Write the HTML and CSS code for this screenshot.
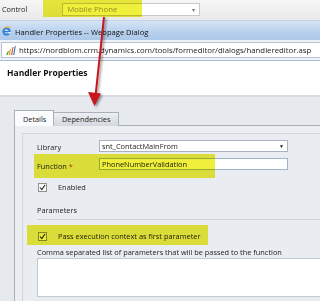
FILE: index.html
```html
<!DOCTYPE html>
<html lang="en">
<head>
<meta charset="utf-8">
<title>Handler Properties</title>
<link rel="stylesheet" href="styles.css">
</head>
<body>
<div class="page">
  <div class="formbar">
    <span class="formbar-label">Control</span>
    <div class="combo-top">
      <span class="combo-top-text">Mobile Phone</span>
      <span class="combo-top-caret">&#9662;</span>
    </div>
  </div>

  <div class="titlebar">
    <svg class="ie-icon" width="9" height="10" viewBox="0 0 9 10">
      <circle cx="4.5" cy="5.5" r="3.2" fill="none" stroke="#2a7fd6" stroke-width="1.8"/>
      <rect x="2" y="5" width="5.5" height="1.2" fill="#2a7fd6"/>
      <rect x="6" y="6" width="3" height="1.5" fill="#dfe9f6"/>
      <path d="M1 3.5 C3 0.5 8 0 8.5 1.5" fill="none" stroke="#f2b620" stroke-width="1"/>
    </svg>
    <span class="title-text">Handler Properties -- Webpage Dialog</span>
  </div>

  <div class="addressbar">
    <div class="address-field">
      <svg class="crm-icon" width="11" height="11" viewBox="0 0 11 11">
        <path d="M1 10 L3 6 L4 6 L2.5 10 Z" fill="#3a9a3a"/>
        <path d="M3.5 10 L5 4 L6 4 L5 10 Z" fill="#f0a020"/>
        <path d="M6 10 L7.5 2 L8.5 2 L7.2 10 Z" fill="#e0501a"/>
        <path d="M8.2 10 L9.8 1 L10.8 1 L9.3 10 Z" fill="#2a6fc8"/>
      </svg>
      <span class="url">https://nordblom.crm.dynamics.com/tools/formeditor/dialogs/handlereditor.asp</span>
    </div>
  </div>

  <div class="dialog-header">
    <h1 class="dialog-title">Handler Properties</h1>
  </div>

  <div class="dialog-body">
    <div class="tabs">
      <div class="tab tab-active">Details</div>
      <div class="tab">Dependencies</div>
    </div>
    <div class="tab-panel">
      <div class="section">
        <div class="field-row row-library">
          <span class="field-label">Library</span>
          <div class="combo">
            <span class="combo-text">snt_ContactMainFrom</span>
            <span class="combo-caret">&#9660;</span>
          </div>
        </div>
        <div class="field-row row-function">
          <span class="field-label">Function <span class="req">*</span></span>
          <div class="textbox">PhoneNumberValidation</div>
        </div>
        <div class="check-row row-enabled">
          <span class="checkbox">
            <svg width="7" height="7" viewBox="0 0 7 7"><path d="M1 3.5 L2.8 5.5 L6 1" fill="none" stroke="#222" stroke-width="1.1"/></svg>
          </span>
          <span class="check-label">Enabled</span>
        </div>
        <div class="group-title">Parameters</div>
        <div class="check-row row-pass">
          <span class="checkbox">
            <svg width="7" height="7" viewBox="0 0 7 7"><path d="M1 3.5 L2.8 5.5 L6 1" fill="none" stroke="#222" stroke-width="1.1"/></svg>
          </span>
          <span class="check-label">Pass execution context as first parameter</span>
        </div>
        <div class="param-label">Comma separated list of parameters that will be passed to the function</div>
        <div class="textarea"></div>
      </div>
    </div>
  </div>

  <div class="marker marker-control"></div>
  <div class="marker marker-function"></div>
  <div class="marker marker-pass"></div>

  <svg class="annotation-arrow" width="320" height="301" viewBox="0 0 320 301">
    <defs>
      <filter id="shadow" x="-50%" y="-50%" width="200%" height="200%">
        <feDropShadow dx="1.5" dy="1.5" stdDeviation="1" flood-color="#000" flood-opacity="0.45"/>
      </filter>
    </defs>
    <g filter="url(#shadow)">
      <line x1="104" y1="17" x2="95.5" y2="96" stroke="#c8141e" stroke-width="2"/>
      <polygon points="88,92 101,93.5 94.5,106" fill="#c8141e"/>
    </g>
  </svg>
</div>
</body>
</html>
```

FILE: styles.css
```css
* { box-sizing: border-box; }

html, body {
  margin: 0;
  padding: 0;
}

body {
  width: 320px;
  height: 301px;
  overflow: hidden;
  font-family: "Open Sans", "Noto Sans", sans-serif;
  font-size: 7.5px;
  color: #1e1e1e;
  background: #e6e9ee;
}

.page {
  position: relative;
  width: 320px;
  height: 301px;
  overflow: hidden;
}

/* top form strip */
.formbar {
  height: 20px;
  background: linear-gradient(#f6f6f6, #e9e9e9);
  display: flex;
  align-items: flex-start;
}

.formbar-label {
  margin-left: 2px;
  margin-top: 4px;
  line-height: 10px;
  font-size: 7.3px;
  color: #222;
}

.combo-top {
  margin-left: 35px;
  margin-top: 3px;
  width: 138px;
  height: 13px;
  border: 1px solid #c8c8c8;
  background: #fff;
  display: flex;
  align-items: center;
  padding-left: 4px;
}

.combo-top-text {
  flex: 1;
  color: #9a9a9a;
  font-size: 7.8px;
  line-height: 11px;
}

.combo-top-caret {
  color: #777;
  font-size: 6px;
  margin-right: 4px;
}

/* window title bar */
.titlebar {
  height: 20px;
  background: linear-gradient(#d6e4f5, #b7cfec 60%, #adc8ea);
  border-top: 1px solid #c4d4e8;
  display: flex;
  align-items: center;
  padding-left: 2px;
}

.ie-icon { display: block; margin-top: 1px; }

.title-text {
  margin-left: 4px;
  font-size: 7.6px;
  line-height: 12px;
  margin-top: 2px;
  color: #111;
}

/* address bar */
.addressbar {
  height: 21px;
  background: #eef2f8;
  border-bottom: 1px solid #a9bdd8;
  padding: 2px 0 2px 1px;
}

.address-field {
  height: 16px;
  background: #fff;
  border: 1px solid #b9c3cf;
  border-right: none;
  display: flex;
  align-items: center;
  padding-left: 3px;
  overflow: hidden;
}

.crm-icon { display: block; flex: none; }

.url {
  margin-left: 3px;
  font-size: 7.8px;
  line-height: 12px;
  color: #222;
  white-space: nowrap;
}

/* dialog header */
.dialog-header {
  height: 36px;
  background: #fff;
  border-bottom: 2px solid #d9dce1;
  padding: 6px 0 0 7px;
}

.dialog-title {
  margin: 0;
  font-size: 8.5px;
  line-height: 11px;
  font-weight: 700;
  color: #111;
}

/* body */
.dialog-body {
  padding: 13px 0 0 14px;
  background: #e6e9ee;
  height: 204px;
}

.tabs {
  display: flex;
  align-items: flex-end;
  height: 16px;
  position: relative;
  z-index: 1;
}

.tab {
  height: 14px;
  padding: 0 8px;
  border: 1px solid #a7afba;
  border-bottom: none;
  background: linear-gradient(#eceff3, #d3d8df);
  line-height: 13px;
  font-size: 7.3px;
  color: #222;
}

.tab-active {
  height: 16px;
  width: 40px;
  padding: 0 0 0 8px;
  background: #fbfcfd;
  line-height: 17px;
}

.tab + .tab {
  border-left: none;
}

.tab-panel {
  margin-top: -1px;
  border-top: 1px solid #a7afba;
  border-left: 1px solid #a7afba;
  background: #eceef2;
  padding: 7px 0 0 7px;
  height: 176px;
}

.section {
  border-top: 1px solid #d2d6dc;
  border-left: 1px solid #d2d6dc;
  background: #e9ecf0;
  height: 170px;
  padding: 6px 0 0 14px;
}

.field-row {
  display: flex;
  align-items: center;
  height: 12px;
}

.row-function {
  margin-top: 6px;
}

.field-label {
  width: 62px;
  font-size: 7.4px;
  line-height: 10px;
  color: #222;
  padding-top: 1px;
}

.row-function .field-label { padding-top: 4px; }

.req { color: #e0302a; }

.combo {
  width: 189px;
  height: 12px;
  border: 1px solid #aab2bd;
  background: #fff;
  display: flex;
  align-items: center;
  padding-left: 2px;
}

.combo-text {
  flex: 1;
  font-size: 7.4px;
  line-height: 10px;
}

.combo-caret {
  font-size: 5px;
  margin-right: 3px;
  color: #111;
}

.textbox {
  width: 189px;
  height: 12px;
  border: 1px solid #9fb3cf;
  background: #fff;
  padding-left: 2px;
  font-size: 7.4px;
  line-height: 10px;
}

.check-row {
  display: flex;
  align-items: center;
  height: 10px;
}

.row-enabled { margin-top: 12px; }
.row-pass { margin-top: 11px; }

.checkbox {
  width: 9px;
  height: 9px;
  margin-left: 1px;
  border: 1px solid #8e8f8f;
  background: linear-gradient(#f4f4f4, #fff);
  display: flex;
  align-items: center;
  justify-content: center;
}

.checkbox svg { display: block; }

.check-label {
  margin-left: 11px;
  font-size: 7.4px;
  line-height: 10px;
}

.group-title {
  margin-top: 13px;
  height: 15px;
  border-bottom: 1px solid #cfd3d9;
  font-size: 7.4px;
  line-height: 10px;
  color: #222;
}

.param-label {
  margin-top: 6px;
  font-size: 7.4px;
  line-height: 10px;
  color: #222;
  white-space: nowrap;
}

.textarea {
  margin-top: 1px;
  height: 39px;
  border: 1px solid #c3c8cf;
  border-right: none;
  background: #fff;
}

/* highlighter marks */
.marker {
  position: absolute;
  background: #efef3c;
  mix-blend-mode: multiply;
}

.marker-control { left: 43px; top: 0; width: 99px; height: 17px; }
.marker-function { left: 34px; top: 154px; width: 181px; height: 24px; }
.marker-pass { left: 27px; top: 225px; width: 181px; height: 20px; }

/* annotation arrow */
.annotation-arrow {
  position: absolute;
  left: 0;
  top: 0;
  pointer-events: none;
}
```
